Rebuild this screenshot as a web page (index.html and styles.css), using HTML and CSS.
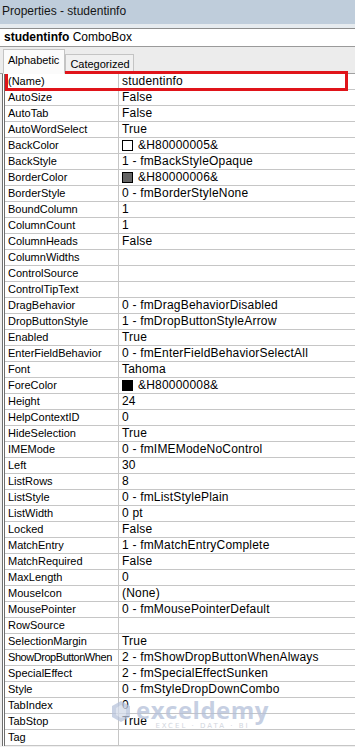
FILE: index.html
```html
<!DOCTYPE html>
<html>
<head>
<meta charset="utf-8">
<link rel="stylesheet" href="styles.css">
</head>
<body>
<div class="window">
  <div class="titlebar">Properties - studentinfo</div>
  <div class="titlestrip"></div>
  <div class="objectrow"><b>studentinfo</b> ComboBox</div>
  <div class="tabs">
    <div class="tab active">Alphabetic</div>
    <div class="tab">Categorized</div>
    <div class="tabfill"></div>
  </div>
  <div class="grid">
    <div class="row"><div class="name">(Name)</div><div class="val">studentinfo</div></div>
    <div class="row"><div class="name">AutoSize</div><div class="val">False</div></div>
    <div class="row"><div class="name">AutoTab</div><div class="val">False</div></div>
    <div class="row"><div class="name">AutoWordSelect</div><div class="val">True</div></div>
    <div class="row"><div class="name">BackColor</div><div class="val"><span class="sw sw-white"></span>&amp;H80000005&amp;</div></div>
    <div class="row"><div class="name">BackStyle</div><div class="val">1 - fmBackStyleOpaque</div></div>
    <div class="row"><div class="name">BorderColor</div><div class="val"><span class="sw sw-gray"></span>&amp;H80000006&amp;</div></div>
    <div class="row"><div class="name">BorderStyle</div><div class="val">0 - fmBorderStyleNone</div></div>
    <div class="row"><div class="name">BoundColumn</div><div class="val">1</div></div>
    <div class="row"><div class="name">ColumnCount</div><div class="val">1</div></div>
    <div class="row"><div class="name">ColumnHeads</div><div class="val">False</div></div>
    <div class="row"><div class="name">ColumnWidths</div><div class="val"></div></div>
    <div class="row"><div class="name">ControlSource</div><div class="val"></div></div>
    <div class="row"><div class="name">ControlTipText</div><div class="val"></div></div>
    <div class="row"><div class="name">DragBehavior</div><div class="val">0 - fmDragBehaviorDisabled</div></div>
    <div class="row"><div class="name">DropButtonStyle</div><div class="val">1 - fmDropButtonStyleArrow</div></div>
    <div class="row"><div class="name">Enabled</div><div class="val">True</div></div>
    <div class="row"><div class="name">EnterFieldBehavior</div><div class="val">0 - fmEnterFieldBehaviorSelectAll</div></div>
    <div class="row"><div class="name">Font</div><div class="val">Tahoma</div></div>
    <div class="row"><div class="name">ForeColor</div><div class="val"><span class="sw sw-black"></span>&amp;H80000008&amp;</div></div>
    <div class="row"><div class="name">Height</div><div class="val">24</div></div>
    <div class="row"><div class="name">HelpContextID</div><div class="val">0</div></div>
    <div class="row"><div class="name">HideSelection</div><div class="val">True</div></div>
    <div class="row"><div class="name">IMEMode</div><div class="val">0 - fmIMEModeNoControl</div></div>
    <div class="row"><div class="name">Left</div><div class="val">30</div></div>
    <div class="row"><div class="name">ListRows</div><div class="val">8</div></div>
    <div class="row"><div class="name">ListStyle</div><div class="val">0 - fmListStylePlain</div></div>
    <div class="row"><div class="name">ListWidth</div><div class="val">0 pt</div></div>
    <div class="row"><div class="name">Locked</div><div class="val">False</div></div>
    <div class="row"><div class="name">MatchEntry</div><div class="val">1 - fmMatchEntryComplete</div></div>
    <div class="row"><div class="name">MatchRequired</div><div class="val">False</div></div>
    <div class="row"><div class="name">MaxLength</div><div class="val">0</div></div>
    <div class="row"><div class="name">MouseIcon</div><div class="val">(None)</div></div>
    <div class="row"><div class="name">MousePointer</div><div class="val">0 - fmMousePointerDefault</div></div>
    <div class="row"><div class="name">RowSource</div><div class="val"></div></div>
    <div class="row"><div class="name">SelectionMargin</div><div class="val">True</div></div>
    <div class="row"><div class="name tight">ShowDropButtonWhen</div><div class="val">2 - fmShowDropButtonWhenAlways</div></div>
    <div class="row"><div class="name">SpecialEffect</div><div class="val">2 - fmSpecialEffectSunken</div></div>
    <div class="row"><div class="name">Style</div><div class="val">0 - fmStyleDropDownCombo</div></div>
    <div class="row"><div class="name">TabIndex</div><div class="val">0</div></div>
    <div class="row"><div class="name">TabStop</div><div class="val">True</div></div>
    <div class="row"><div class="name">Tag</div><div class="val"></div></div>
  </div>
  <div class="highlight"></div>
  <div class="watermark">
    <svg class="wm-icon" width="18" height="22" viewBox="0 0 18 22">
      <polygon points="9,0 18,5 18,16 9,21 0,16 0,5" fill="#b8c4dc"/>
      <polygon points="9,4 14,7 14,14 9,17 4,14 4,7" fill="#d3dbea"/>
    </svg>
    <div class="wm-text">
      <div class="wm-big">exceldemy</div>
      <div class="wm-small">EXCEL · DATA · BI</div>
    </div>
  </div>
</div>
</body>
</html>
```
FILE: styles.css
```css
html, body {
  margin: 0;
  padding: 0;
  background: #f0f0f0;
}
body {
  width: 355px;
  height: 747px;
  overflow: hidden;
  font-family: "Liberation Sans", Arial, sans-serif;
  color: #000;
}
.window {
  position: relative;
  width: 355px;
  height: 747px;
}
.titlebar {
  height: 24px;
  background: #bfcddb;
  font-size: 12px;
  line-height: 22px;
  padding-left: 2px;
  color: #151515;
}
.titlestrip {
  height: 4px;
  background: #e6ebef;
  border-bottom: 1px solid #8c8c8c;
}
.objectrow {
  height: 17px;
  background: #fff;
  font-size: 12px;
  line-height: 17px;
  padding-left: 4px;
  border-bottom: 1px solid #9a9a9a;
}
.objectrow b {
  font-weight: bold;
}
.tabs {
  height: 27px;
  background: #ececec;
  display: flex;
  align-items: flex-end;
  padding-left: 3px;
  box-sizing: border-box;
  border-bottom: 1px solid #a0a0a0;
}
.tab {
  font-size: 11px;
  box-sizing: border-box;
  border: 1px solid #c4c4c4;
  border-bottom: none;
  background: #f0f0f0;
  height: 20px;
  line-height: 18px;
  padding: 0 3px 0 4px;
  margin-bottom: -1px;
}
.tab.active {
  background: #fbfbfb;
  height: 25px;
  line-height: 20px;
  padding: 0 5px 0 4px;
  position: relative;
  z-index: 1;
  border-bottom: 1px solid #fbfbfb;
}
.tabfill {
  flex: 1;
}
.grid {
  margin-left: 2px;
  border-left: 3px double #6e6e6e;
  background: #fff;
}
.row {
  display: grid;
  grid-template-columns: 114px 1fr;
  height: 16px;
  box-sizing: border-box;
  border-bottom: 1px solid #c6c6c6;
  font-size: 11px;
  line-height: 15px;
}
.name {
  border-right: 1px solid #c6c6c6;
  padding-left: 3px;
  white-space: nowrap;
  overflow: hidden;
}
.name.tight {
  letter-spacing: -0.45px;
}
.val {
  padding-left: 3px;
  white-space: nowrap;
  overflow: hidden;
  display: flex;
  align-items: center;
  font-size: 12px;
  letter-spacing: 0.2px;
}
.sw {
  display: inline-block;
  width: 11px;
  height: 11px;
  box-sizing: border-box;
  border: 1px solid #000;
  margin-right: 5px;
}
.sw-white { background: #fff; }
.sw-gray { background: #646464; }
.sw-black { background: #000; }
.highlight {
  position: absolute;
  left: 5px;
  top: 71px;
  width: 343px;
  height: 20px;
  box-sizing: border-box;
  border: 3px solid #e0141a;
}
.watermark {
  position: absolute;
  left: 112px;
  top: 698px;
  display: flex;
  align-items: flex-start;
  gap: 6px;
  opacity: 0.75;
  pointer-events: none;
}
.wm-icon {
  margin-top: 3px;
}
.wm-text {
  display: flex;
  flex-direction: column;
  align-items: center;
}
.wm-big {
  font-family: "Open Sans", "DejaVu Sans", sans-serif;
  font-weight: bold;
  font-size: 24px;
  line-height: 24px;
  color: #b3bfd9;
  letter-spacing: 0.5px;
}
.wm-small {
  font-family: "DejaVu Sans", sans-serif;
  font-size: 7px;
  letter-spacing: 2px;
  color: #c3c9d4;
}
```
